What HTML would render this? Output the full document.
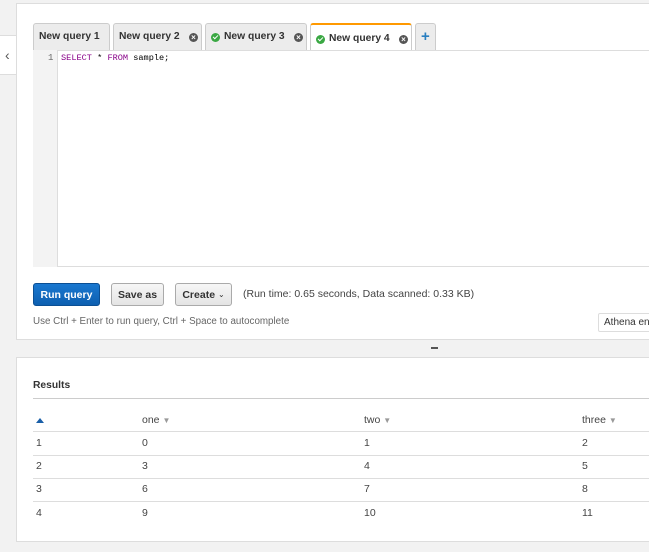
<!DOCTYPE html>
<html><head><style>
*{margin:0;padding:0;box-sizing:border-box}
body{width:649px;height:552px;background:#f2f2f2;font-family:"Liberation Sans",Arial,sans-serif;position:relative;overflow:hidden;font-size:11px;color:#333}
.abs{position:absolute}
.panel{background:#fff;border:1px solid #ddd;border-right:none}
.tab{position:absolute;top:23px;height:27px;background:#ececec;border:1px solid #ccc;border-bottom:none;border-radius:3px 3px 0 0;font-weight:bold;font-size:10.3px;color:#333;line-height:26px;padding-left:5px;white-space:nowrap}
.x{display:inline-block;width:9px;height:9px;border-radius:50%;background:#555;color:#fff;font-size:8px;line-height:9px;text-align:center;position:absolute;top:9px}
.ok{display:inline-block;width:9px;height:9px;border-radius:50%;background:#3aa843;position:absolute;top:9px;left:5px}
.ok:after{content:"";position:absolute;left:2px;top:2px;width:4px;height:2px;border-left:1.5px solid #fff;border-bottom:1.5px solid #fff;transform:rotate(-45deg)}
.btn{position:absolute;top:283px;height:23px;border:1px solid #aaa;border-radius:3px;background:linear-gradient(#f6f6f6,#e4e4e4);font-weight:bold;font-size:10.5px;display:flex;align-items:center;justify-content:center;color:#333;white-space:nowrap}
.cell{position:absolute;font-size:10.5px;color:#444}
.hl{position:absolute;left:33px;width:616px;height:1px;background:#ddd}
</style></head><body>
<div class="abs panel" style="left:16px;top:3px;width:633px;height:337px;"></div>
<div class="abs" style="left:0;top:35px;width:17px;height:40px;background:#fff;border:1px solid #ddd;border-left:none;"></div>
<div class="abs" style="left:5px;top:47px;font-size:14px;color:#555;">&lsaquo;</div>

<div class="tab" style="left:33px;width:77px;">New query 1</div>
<div class="tab" style="left:113px;width:89px;">New query 2<span class="x" style="left:75px">×</span></div>
<div class="tab" style="left:205px;width:102px;padding-left:18px;"><span class="ok"></span>New query 3<span class="x" style="left:88px">×</span></div>
<div class="tab" style="left:310px;width:102px;background:#fff;border-top:2px solid #f90;padding-left:18px;line-height:27px;"><span class="ok" style="top:10px"></span>New query 4<span class="x" style="left:88px;top:10px">×</span></div>
<div class="tab" style="left:415px;width:21px;color:#2a7fc0;font-size:15px;padding-left:5px;">+</div>

<div class="abs" style="left:33px;top:50px;width:616px;height:217px;border:1px solid #ddd;border-right:none;background:#fff;"></div>
<div class="abs" style="left:33px;top:50px;width:25px;height:217px;background:#f3f3f3;border-right:1px solid #ddd;"></div>
<div class="abs" style="left:48px;top:53px;font-family:'Liberation Mono',monospace;font-size:9px;color:#666;">1</div>
<div class="abs" style="left:61px;top:53px;font-family:'Liberation Mono',monospace;font-size:8.6px;color:#000;"><span style="color:#808">SELECT</span> * <span style="color:#808">FROM</span> sample;</div>

<div class="btn" style="left:33px;width:67px;background:linear-gradient(#1a78d0,#0d5fb0);border-color:#0b4f94;color:#fff;">Run query</div>
<div class="btn" style="left:111px;width:53px;">Save as</div>
<div class="btn" style="left:175px;width:57px;">Create&nbsp;<span style="font-weight:normal;font-size:8px">&#8964;</span></div>
<div class="abs" style="left:243px;top:288px;font-size:10.5px;color:#444;white-space:nowrap">(Run time: 0.65 seconds, Data scanned: 0.33 KB)</div>
<div class="abs" style="left:33px;top:316px;font-size:9.8px;color:#666;white-space:nowrap">Use Ctrl + Enter to run query, Ctrl + Space to autocomplete</div>
<div class="abs" style="left:598px;top:313px;width:60px;height:19px;border:1px solid #ddd;border-radius:2px;font-size:10px;line-height:17px;padding-left:5px;color:#333;white-space:nowrap;overflow:hidden">Athena engine</div>

<div class="abs" style="left:431px;top:347px;width:7px;height:2px;background:#555;"></div>

<div class="abs panel" style="left:16px;top:357px;width:633px;height:185px;"></div>
<div class="abs" style="left:33px;top:380px;font-weight:bold;font-size:10.3px;color:#333;">Results</div>
<div class="hl" style="top:398px;background:#ccc;"></div>

<div class="abs" style="left:36px;top:418px;width:0;height:0;border-left:4px solid transparent;border-right:4px solid transparent;border-bottom:5px solid #1a5fa8;"></div>
<div class="cell" style="left:142px;top:414px;">one <span style="color:#999;font-size:8px">&#9660;</span></div>
<div class="cell" style="left:364px;top:414px;">two <span style="color:#999;font-size:8px">&#9660;</span></div>
<div class="cell" style="left:582px;top:414px;">three <span style="color:#999;font-size:8px">&#9660;</span></div>
<div class="hl" style="top:431px"></div>
<div class="hl" style="top:455px"></div>
<div class="hl" style="top:478px"></div>
<div class="hl" style="top:501px"></div>

<div class="cell" style="left:36px;top:437px">1</div><div class="cell" style="left:142px;top:437px">0</div><div class="cell" style="left:364px;top:437px">1</div><div class="cell" style="left:582px;top:437px">2</div>
<div class="cell" style="left:36px;top:460px">2</div><div class="cell" style="left:142px;top:460px">3</div><div class="cell" style="left:364px;top:460px">4</div><div class="cell" style="left:582px;top:460px">5</div>
<div class="cell" style="left:36px;top:483px">3</div><div class="cell" style="left:142px;top:483px">6</div><div class="cell" style="left:364px;top:483px">7</div><div class="cell" style="left:582px;top:483px">8</div>
<div class="cell" style="left:36px;top:507px">4</div><div class="cell" style="left:142px;top:507px">9</div><div class="cell" style="left:364px;top:507px">10</div><div class="cell" style="left:582px;top:507px">11</div>
</body></html>
